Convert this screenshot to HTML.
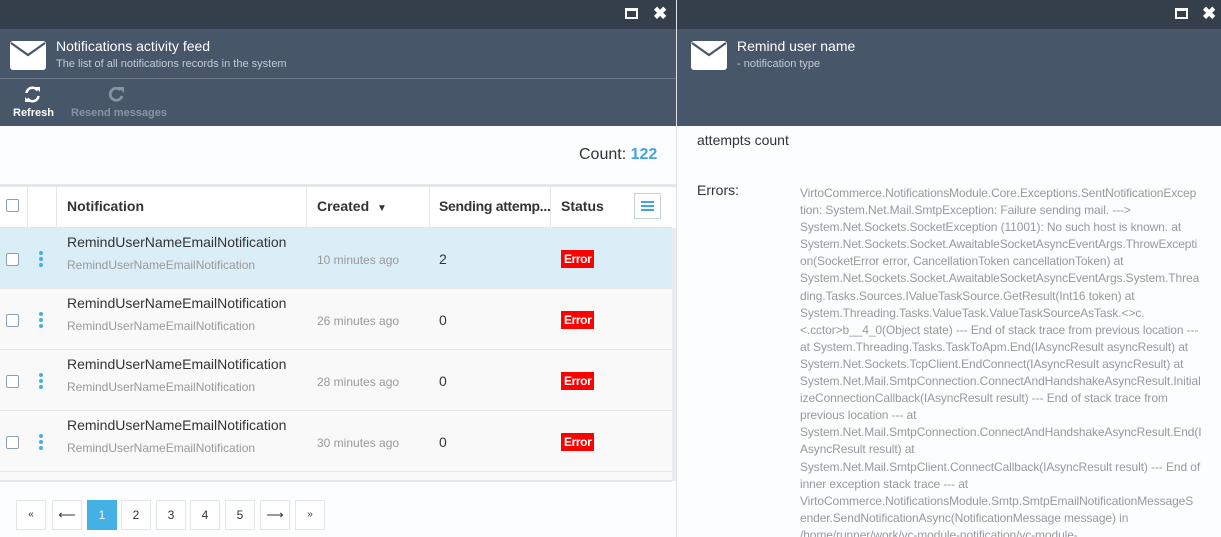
<!DOCTYPE html>
<html style="overflow:hidden;height:537px"><head><meta charset="utf-8"><style>
*{box-sizing:border-box;margin:0;padding:0}
body{width:1221px;height:537px;overflow:hidden;font-family:"Liberation Sans",sans-serif;background:#fcfdfe;position:relative}
.abs{position:absolute}
.top{background:#343f4b;height:29px;top:0}
.hdr{background:#475669;top:29px}
.title{color:#fff;font-size:14px}
.sub{color:#c3cbd5;font-size:11px}
.row{position:absolute;left:0;width:672px;height:61px;border-bottom:1px solid #e3e7ec;background:#f9f9f9}
.cb{position:absolute;left:6px;width:13px;height:13px;border:1px solid #8aa0b4;border-radius:2px;background:#fff}
.dots{position:absolute;left:39px;width:4px}
.dots i{display:block;width:4px;height:4px;border-radius:2px;background:#43b0e6;margin-bottom:2px}
.n1{position:absolute;left:67px;top:6px;font-size:14px;color:#333}
.n2{position:absolute;left:67px;top:30px;font-size:12px;color:#999}
.cr{position:absolute;left:317px;top:25px;font-size:12px;color:#999}
.sa{position:absolute;left:439px;top:23px;font-size:14px;color:#333}
.err{position:absolute;left:561px;top:22px;background:#f00;color:#fff;font-size:12px;font-weight:bold;padding:2px 3px;letter-spacing:-0.4px}
.pg{position:absolute;top:500px;height:30px;width:30px;border:1px solid #e3e7ec;background:#fff;font-size:12px;text-align:center;line-height:28px;color:#333}
.et div{height:17.1px;white-space:nowrap}
</style></head><body>
<div class="abs top" style="left:0;width:676px"></div>
<div class="abs top" style="left:677px;width:544px"></div>
<div class="abs" style="left:676px;top:0;width:1px;height:537px;background:#dfe3e8"></div>
<div class="abs" style="left:625px;top:8px;width:13px;height:11px;border:2px solid #fff;border-top-width:3px"></div>
<div class="abs" style="left:653px;top:4px;color:#fff;font-size:17px;font-weight:bold">✖</div>
<div class="abs" style="left:1175px;top:8px;width:13px;height:11px;border:2px solid #fff;border-top-width:3px"></div>
<div class="abs" style="left:1202px;top:4px;color:#fff;font-size:17px;font-weight:bold">✖</div>
<div class="abs hdr" style="left:0;width:676px;height:97px"></div>
<div class="abs" style="left:0;top:78px;width:676px;height:1px;background:#6a7889"></div>
<svg class="abs" style="left:10px;top:41px" width="36" height="29" viewBox="0 0 36 29"><rect width="36" height="29" rx="3" fill="#fff"/><path d="M1 2 L18 14 L35 2" stroke="#475669" stroke-width="2.2" fill="none"/></svg>
<div class="abs title" style="left:56px;top:38px">Notifications activity feed</div>
<div class="abs sub" style="left:56px;top:58px">The list of all notifications records in the system</div>
<svg class="abs" style="left:24px;top:86px" width="17" height="17" viewBox="0 0 17 17"><path d="M2.5 7 A6 6 0 0 1 13.5 4.5" stroke="#fff" stroke-width="2.6" fill="none"/><path d="M11 1 L16 1 L16 6 Z" fill="#fff"/><path d="M14.5 10 A6 6 0 0 1 3.5 12.5" stroke="#fff" stroke-width="2.6" fill="none"/><path d="M1 11 L6 16 L1 16 Z" fill="#fff"/></svg>
<div class="abs" style="left:13px;top:107px;color:#fff;font-size:11px;font-weight:bold">Refresh</div>
<svg class="abs" style="left:108px;top:86px" width="17" height="17" viewBox="0 0 17 17"><path d="M14 10 A6 6 0 1 1 12.5 4" stroke="#8794a3" stroke-width="2.8" fill="none"/><path d="M10 1 L16 1 L16 7 Z" fill="#8794a3"/></svg>
<div class="abs" style="left:71px;top:107px;color:#8794a3;font-size:11px;font-weight:bold">Resend messages</div>
<div class="abs hdr" style="left:677px;width:544px;height:97px"></div>
<svg class="abs" style="left:691px;top:41px" width="36" height="29" viewBox="0 0 36 29"><rect width="36" height="29" rx="3" fill="#fff"/><path d="M1 2 L18 14 L35 2" stroke="#475669" stroke-width="2.2" fill="none"/></svg>
<div class="abs title" style="left:737px;top:38px">Remind user name</div>
<div class="abs sub" style="left:737px;top:58px">- notification type</div>
<div class="abs" style="left:579px;top:146px;font-size:16px;color:#333">Count: <b style="color:#43a5dc">122</b></div>
<div class="abs" style="left:0;top:184px;width:676px;height:3px;background:#e3e7ec"></div>
<div class="abs" style="left:0;top:187px;width:672px;height:41px;background:#fff;border-bottom:1px solid #e3e7ec"></div>
<div class="cb" style="top:199px;left:6px"></div>
<div class="abs" style="left:27px;top:187px;width:1px;height:285px;background:#e3e7ec"></div>
<div class="abs" style="left:56px;top:187px;width:1px;height:285px;background:#e3e7ec"></div>
<div class="abs" style="left:306px;top:187px;width:1px;height:41px;background:#e3e7ec"></div>
<div class="abs" style="left:429px;top:187px;width:1px;height:41px;background:#e3e7ec"></div>
<div class="abs" style="left:550px;top:187px;width:1px;height:41px;background:#e3e7ec"></div>
<div class="abs" style="left:67px;top:198px;font-size:14px;font-weight:bold;color:#333">Notification</div>
<div class="abs" style="left:317px;top:198px;font-size:14px;font-weight:bold;color:#333">Created <span style="font-size:10px;margin-left:4px">▼</span></div>
<div class="abs" style="left:439px;top:198px;font-size:14px;font-weight:bold;color:#333;letter-spacing:-0.3px">Sending attemp...</div>
<div class="abs" style="left:561px;top:198px;font-size:14px;font-weight:bold;color:#333">Status</div>
<div class="abs" style="left:634px;top:193px;width:27px;height:26px;border:1px solid #c9d2dc;background:#fff"><div style="margin:7px 0 0 6px;width:13px;height:2px;background:#43a5dc;box-shadow:0 4px 0 #43a5dc,0 8px 0 #43a5dc"></div></div>
<div class="row" style="top:228px;background:#daeef8"><div class="cb" style="top:25px"></div><div class="dots" style="top:23px"><i></i><i></i><i></i></div><div class="n1">RemindUserNameEmailNotification</div><div class="n2">RemindUserNameEmailNotification</div><div class="cr">10 minutes ago</div><div class="sa">2</div><div class="err">Error</div></div>
<div class="row" style="top:289px"><div class="cb" style="top:25px"></div><div class="dots" style="top:23px"><i></i><i></i><i></i></div><div class="n1">RemindUserNameEmailNotification</div><div class="n2">RemindUserNameEmailNotification</div><div class="cr">26 minutes ago</div><div class="sa">0</div><div class="err">Error</div></div>
<div class="row" style="top:350px"><div class="cb" style="top:25px"></div><div class="dots" style="top:23px"><i></i><i></i><i></i></div><div class="n1">RemindUserNameEmailNotification</div><div class="n2">RemindUserNameEmailNotification</div><div class="cr">28 minutes ago</div><div class="sa">0</div><div class="err">Error</div></div>
<div class="row" style="top:411px"><div class="cb" style="top:25px"></div><div class="dots" style="top:23px"><i></i><i></i><i></i></div><div class="n1">RemindUserNameEmailNotification</div><div class="n2">RemindUserNameEmailNotification</div><div class="cr">30 minutes ago</div><div class="sa">0</div><div class="err">Error</div></div>
<div class="row" style="top:472px;height:8px;border:none"></div>
<div class="abs" style="left:672px;top:228px;width:4px;height:253px;background:#e8ebef"></div>
<div class="abs" style="left:0;top:480px;width:672px;height:2px;background:#e3e7ec"></div>
<div class="pg" style="left:16px;font-size:10px">«</div>
<div class="pg" style="left:52px">⟵</div>
<div class="pg" style="left:87px;background:#43b0e6;color:#fff;border-color:#43b0e6">1</div>
<div class="pg" style="left:121px">2</div>
<div class="pg" style="left:156px">3</div>
<div class="pg" style="left:190px">4</div>
<div class="pg" style="left:225px">5</div>
<div class="pg" style="left:260px">⟶</div>
<div class="pg" style="left:295px;font-size:10px">»</div>
<div class="abs" style="left:697px;top:132px;font-size:14px;color:#333">attempts count</div>
<div class="abs" style="left:697px;top:182px;font-size:14px;color:#333">Errors:</div>
<div class="abs et" style="left:800px;top:186px;font-size:12px;color:#999;width:410px;overflow:hidden;letter-spacing:-0.1px">
<div>VirtoCommerce.NotificationsModule.Core.Exceptions.SentNotificationExcep</div>
<div>tion: System.Net.Mail.SmtpException: Failure sending mail. ---&gt;</div>
<div>System.Net.Sockets.SocketException (11001): No such host is known. at</div>
<div>System.Net.Sockets.Socket.AwaitableSocketAsyncEventArgs.ThrowExcepti</div>
<div>on(SocketError error, CancellationToken cancellationToken) at</div>
<div>System.Net.Sockets.Socket.AwaitableSocketAsyncEventArgs.System.Threa</div>
<div>ding.Tasks.Sources.IValueTaskSource.GetResult(Int16 token) at</div>
<div>System.Threading.Tasks.ValueTask.ValueTaskSourceAsTask.&lt;&gt;c.</div>
<div>&lt;.cctor&gt;b__4_0(Object state) --- End of stack trace from previous location ---</div>
<div>at System.Threading.Tasks.TaskToApm.End(IAsyncResult asyncResult) at</div>
<div>System.Net.Sockets.TcpClient.EndConnect(IAsyncResult asyncResult) at</div>
<div>System.Net.Mail.SmtpConnection.ConnectAndHandshakeAsyncResult.Initial</div>
<div>izeConnectionCallback(IAsyncResult result) --- End of stack trace from</div>
<div>previous location --- at</div>
<div>System.Net.Mail.SmtpConnection.ConnectAndHandshakeAsyncResult.End(I</div>
<div>AsyncResult result) at</div>
<div>System.Net.Mail.SmtpClient.ConnectCallback(IAsyncResult result) --- End of</div>
<div>inner exception stack trace --- at</div>
<div>VirtoCommerce.NotificationsModule.Smtp.SmtpEmailNotificationMessageS</div>
<div>ender.SendNotificationAsync(NotificationMessage message) in</div>
<div>/home/runner/work/vc-module-notification/vc-module-</div>
</div>
</body></html>
